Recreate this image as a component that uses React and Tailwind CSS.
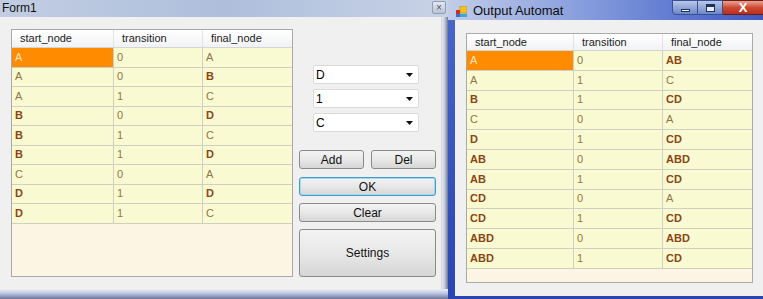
const form1Rows = [
  ["A", "0", "A"],
  ["A", "0", "B"],
  ["A", "1", "C"],
  ["B", "0", "D"],
  ["B", "1", "C"],
  ["B", "1", "D"],
  ["C", "0", "A"],
  ["D", "1", "D"],
  ["D", "1", "C"],
];

const outputRows = [
  ["A", "0", "AB"],
  ["A", "1", "C"],
  ["B", "1", "CD"],
  ["C", "0", "A"],
  ["D", "1", "CD"],
  ["AB", "0", "ABD"],
  ["AB", "1", "CD"],
  ["CD", "0", "A"],
  ["CD", "1", "CD"],
  ["ABD", "0", "ABD"],
  ["ABD", "1", "CD"],
];

// nodes that are drawn bold in the grid
const boldNodes = new Set(["B", "D", "AB", "CD", "ABD"]);

function Cell({ value, width, selected, bold, last }) {
  let classes = "flex h-full items-center px-[3px] text-[11px] leading-none";
  if (!last) classes += " border-r border-[#cfcfc2]";
  if (selected) {
    classes += " bg-[#ff8c00] text-[#ffe6c4]";
  } else if (bold) {
    classes += " font-bold text-[#8b4513]";
  } else {
    classes += " text-[#8d7645]";
  }
  return (
    <div className={classes} style={{ width }}>
      {value}
    </div>
  );
}

function DataGrid({ rows, widths, headerH, rowH }) {
  return (
    <div className="flex h-full flex-col overflow-hidden border border-[#a9a9a9] bg-[#fcf5e3]">
      <div
        className="flex shrink-0 border-b border-[#d5d5d5] bg-gradient-to-b from-white to-[#f1f2f4] text-[11px] text-[#1b1b1b]"
        style={{ height: headerH }}
      >
        {["start_node", "transition", "final_node"].map((h, i) => (
          <div
            key={h}
            className={`flex h-full items-center pl-[8px] ${i < 2 ? "border-r border-[#e3e3e3]" : ""}`}
            style={{ width: widths[i] }}
          >
            {h}
          </div>
        ))}
      </div>
      {rows.map((row, r) => (
        <div
          key={r}
          className="flex shrink-0 border-b border-[#cfcfc2] bg-[#fafad2]"
          style={{ height: rowH }}
        >
          <Cell value={row[0]} width={widths[0]} selected={r === 0} bold={boldNodes.has(row[0])} />
          <Cell value={row[1]} width={widths[1]} />
          <Cell value={row[2]} width={widths[2]} bold={boldNodes.has(row[2])} last />
        </div>
      ))}
    </div>
  );
}

function Combo({ value }) {
  return (
    <div className="flex h-[19px] w-[106px] items-center justify-between rounded-[2px] border border-[#dadada] bg-white pl-[2px] pr-[5px] text-[12px] text-black">
      <span>{value}</span>
      <svg width="7" height="4" viewBox="0 0 7 4">
        <path d="M0 0h7L3.5 4z" fill="#111" />
      </svg>
    </div>
  );
}

function Btn({ children, className = "", focused = false }) {
  return (
    <div
      className={`flex items-center justify-center rounded-[3px] border bg-gradient-to-b from-[#f3f3f3] via-[#e8e8e8] to-[#d6d6d6] text-[12px] text-[#111] ${
        focused ? "border-[#3d9bcf] shadow-[inset_0_0_0_1px_#a8d8f0]" : "border-[#8a8a8a]"
      } ${className}`}
    >
      {children}
    </div>
  );
}

function Form1() {
  return (
    <div className="flex h-[299px] w-[448px] shrink-0 flex-col">
      <div className="flex h-[17px] shrink-0 items-start justify-between bg-gradient-to-r from-[#c2cde2] via-[#aebfdc] to-[#c8d2e6]">
        <span className="pl-[2px] pt-[1px] text-[12px] leading-[14px] text-[#111]">Form1</span>
        <div className="mr-[2px] mt-[1px] flex h-[13px] w-[14px] items-center justify-center rounded-[2px] border border-[#8e9cb6] bg-gradient-to-b from-[#e3e8f2] to-[#b9c4d8] text-[10px] leading-none text-[#555]">
          ×
        </div>
      </div>
      <div className="flex min-h-0 flex-1">
        <div className="flex flex-1 bg-[#f0f0f0] pl-[11px] pt-[12px]">
          <div className="h-[248px] w-[282px]">
            <DataGrid rows={form1Rows} widths={[102, 89, 89]} headerH={18} rowH={19.5} />
          </div>
          <div className="ml-[6px] flex w-[137px] flex-col">
            <div className="ml-[14px] mt-[36px] flex flex-col gap-[5px]">
              <Combo value="D" />
              <Combo value="1" />
              <Combo value="C" />
            </div>
            <div className="mt-[18px] flex gap-[7px]">
              <Btn className="h-[19px] w-[65px]">Add</Btn>
              <Btn className="h-[19px] w-[65px]">Del</Btn>
            </div>
            <Btn className="mt-[8px] h-[19px] w-[137px]" focused>
              OK
            </Btn>
            <Btn className="mt-[7px] h-[19px] w-[137px]">Clear</Btn>
            <Btn className="mt-[7px] h-[48px] w-[137px]">Settings</Btn>
          </div>
        </div>
        <div className="w-[7px] shrink-0 border-l border-[#d6d6d6] bg-gradient-to-r from-[#e9ebf1] via-[#bcc4d8] to-[#6a7690]" />
      </div>
      <div className="h-[10px] shrink-0 bg-gradient-to-b from-[#f0f0f0] via-[#b4bde0] to-[#6d7596]" />
    </div>
  );
}

function AppIcon() {
  return (
    <svg width="11" height="11" viewBox="0 0 11 11">
      <rect x="4" y="0" width="7" height="7" fill="#f2c21c" stroke="#b08a10" strokeWidth="0.6" />
      <rect x="0" y="4" width="4" height="4" fill="#d62a1e" />
      <rect x="0" y="8" width="4" height="3" fill="#2f6fd0" />
      <rect x="4" y="8" width="7" height="3" fill="#3aa6d8" />
    </svg>
  );
}

function OutputWindow() {
  return (
    <div className="flex h-[299px] flex-1 flex-col bg-gradient-to-b from-[#4a68c8] to-[#2a45b0]">
      <div className="flex h-[20px] shrink-0 items-start bg-gradient-to-r from-[#c3cde9] via-[#7d95da] to-[#3f57c4]">
        <div className="flex items-center pl-[8px] pt-[4px]">
          <AppIcon />
          <span className="ml-[6px] text-[13px] leading-[14px] text-[#0d0d0d]">Output Automat</span>
        </div>
        <div className="ml-auto flex h-[15px]">
          <div className="flex w-[26px] items-center justify-center rounded-bl-[4px] border border-[#39518f] bg-gradient-to-b from-[#b8c8ea] to-[#6f87c8]">
            <div className="mt-[5px] h-[3px] w-[9px] border border-[#20305c] bg-white" />
          </div>
          <div className="flex w-[25px] items-center justify-center border-y border-r border-[#39518f] bg-gradient-to-b from-[#b8c8ea] to-[#6f87c8]">
            <div className="h-[8px] w-[9px] border border-[#20305c] border-t-[3px] bg-[#e8eefc]" />
          </div>
          <div className="flex w-[40px] items-center justify-center border-y border-[#6b1d14] bg-gradient-to-b from-[#e8a496] via-[#cf4a32] to-[#b8301c] text-[13px] font-bold leading-none text-white">
            X
          </div>
        </div>
      </div>
      <div className="flex min-h-0 flex-1 pl-[7px] pb-[3px]">
        <div className="flex flex-1 flex-col bg-[#f0f0f0] pl-[11px] pt-[13px]">
          <div className="h-[250px] w-[287px]">
            <DataGrid rows={outputRows} widths={[107, 89, 89]} headerH={17} rowH={19.8} />
          </div>
        </div>
      </div>
    </div>
  );
}

export default function App() {
  return (
    <div className="flex h-[299px] w-[763px] overflow-hidden bg-[#6d7596] font-['Liberation_Sans',Arial,sans-serif]">
      <Form1 />
      <OutputWindow />
    </div>
  );
}
